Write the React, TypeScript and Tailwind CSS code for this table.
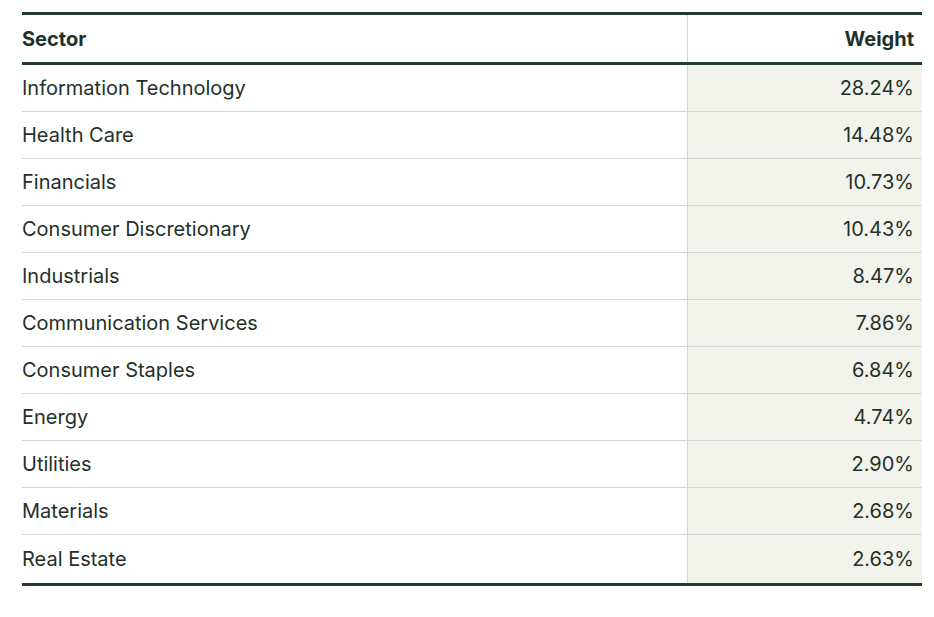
import React from "react";

const rows: [string, string][] = [
  ["Information Technology", "28.24%"],
  ["Health Care", "14.48%"],
  ["Financials", "10.73%"],
  ["Consumer Discretionary", "10.43%"],
  ["Industrials", "8.47%"],
  ["Communication Services", "7.86%"],
  ["Consumer Staples", "6.84%"],
  ["Energy", "4.74%"],
  ["Utilities", "2.90%"],
  ["Materials", "2.68%"],
  ["Real Estate", "2.63%"],
];

export default function App() {
  return (
    <div className="w-[934px] h-[617px] bg-white pt-[12px] pl-[22px]" style={{ fontFamily: "Inter, 'Liberation Sans', sans-serif" }}>
      <div className="w-[900px] flex flex-col text-[#1f3128] text-[20px]">
        <div className="flex h-[53px] border-t-[3px] border-b-[3px] border-[#243a2f]">
          <div className="flex-1 flex items-center font-bold">Sector</div>
          <div className="w-[235px] flex items-center justify-end pr-[8px] font-bold border-l border-[#d4d4d4]">Weight</div>
        </div>
        {rows.map(([name, w], i) => (
          <div
            key={name}
            className={
              i === rows.length - 1
                ? "flex h-[51px] border-b-[3px] border-[#243a2f]"
                : "flex h-[47px] border-b border-[#d6d6d6]"
            }
          >
            <div className="flex-1 flex items-center">{name}</div>
            <div className="w-[235px] flex items-center justify-end pr-[8px] bg-[#f3f3ee] border-l border-[#d4d4d4]">{w}</div>
          </div>
        ))}
      </div>
    </div>
  );
}
